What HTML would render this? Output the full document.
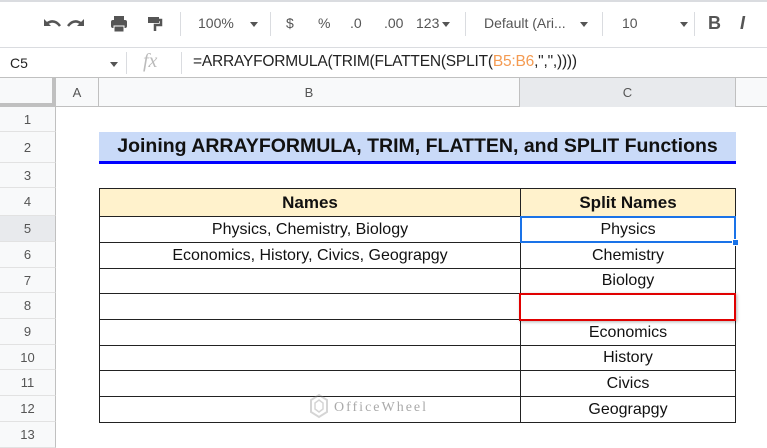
<!DOCTYPE html>
<html><head><meta charset="utf-8"><style>
*{margin:0;padding:0;box-sizing:border-box}
body{width:767px;height:448px;overflow:hidden;background:#fff;font-family:"Liberation Sans",Arial,sans-serif;position:relative;color:#222}
.a{position:absolute}
.rn{position:absolute;left:0;width:56px;background:#f8f9fa;border-right:1px solid #c0c0c0;border-bottom:1px solid #e2e2e2;color:#555;font-size:13px;display:flex;align-items:center;justify-content:center}
.cell{position:absolute;border:1px solid #222;font-size:16px;display:flex;align-items:center;justify-content:center;color:#111}
.tb{color:#555;font-size:14px}
</style></head><body>
<div class="a" style="left:0;top:0;width:767px;height:2px;background:#dadce0"></div>
<svg class="a" style="left:40px;top:14px" width="130" height="20" viewBox="0 0 130 20">
<path d="M6 10 q8-6 14 2" stroke="#555" stroke-width="2.5" fill="none"/><path d="M4 5 v7 h7z" fill="#555"/>
<path d="M42 10 q-8-6 -14 2" stroke="#555" stroke-width="2.5" fill="none"/><path d="M44 5 v7 h-7z" fill="#555"/>
<rect x="74" y="2" width="10" height="4" fill="#555"/><rect x="71" y="6" width="16" height="8" rx="2" fill="#555"/><rect x="74" y="12" width="10" height="6" fill="#555" stroke="#fff" stroke-width="1"/>
<rect x="108" y="3" width="11" height="6" fill="#555"/><path d="M119 6 h2 v5 h-6 v6" stroke="#555" stroke-width="2.5" fill="none"/>
</svg>
<div class="a" style="left:180px;top:12px;width:1px;height:24px;background:#dadce0"></div>
<div class="a tb" style="left:198px;top:15px">100%</div>
<div class="a" style="left:250px;top:22px;border:4px solid transparent;border-top:5px solid #555"></div>
<div class="a" style="left:270px;top:12px;width:1px;height:24px;background:#dadce0"></div>
<div class="a tb" style="left:286px;top:15px">$</div>
<div class="a tb" style="left:318px;top:15px">%</div>
<div class="a tb" style="left:350px;top:15px">.0</div>
<div class="a tb" style="left:384px;top:15px">.00</div>
<div class="a tb" style="left:416px;top:15px">123</div>
<div class="a" style="left:442px;top:22px;border:4px solid transparent;border-top:5px solid #555"></div>
<div class="a" style="left:465px;top:12px;width:1px;height:24px;background:#dadce0"></div>
<div class="a tb" style="left:484px;top:15px">Default (Ari...</div>
<div class="a" style="left:580px;top:22px;border:4px solid transparent;border-top:5px solid #555"></div>
<div class="a" style="left:602px;top:12px;width:1px;height:24px;background:#dadce0"></div>
<div class="a tb" style="left:622px;top:15px">10</div>
<div class="a" style="left:680px;top:22px;border:4px solid transparent;border-top:5px solid #555"></div>
<div class="a" style="left:694px;top:12px;width:1px;height:24px;background:#dadce0"></div>
<div class="a tb" style="left:708px;top:13px;font-weight:bold;font-size:18px">B</div>
<div class="a tb" style="left:740px;top:13px;font-style:italic;font-size:18px;font-weight:bold">I</div>
<div class="a" style="left:0;top:47px;width:767px;height:1px;background:#dadce0"></div>
<div class="a" style="left:10px;top:55px;font-size:14px;color:#222">C5</div>
<div class="a" style="left:110px;top:62px;border:4px solid transparent;border-top:5px solid #555"></div>
<div class="a" style="left:126px;top:52px;width:1px;height:22px;background:#dadce0"></div>
<div class="a" style="left:143px;top:50px;font-size:20px;color:#bbb;font-style:italic;font-family:'Liberation Serif',serif">fx</div>
<div class="a" style="left:181px;top:52px;width:1px;height:22px;background:#dadce0"></div>
<div class="a" style="left:193px;top:53px;font-size:15.5px;color:#222;letter-spacing:-0.2px">=ARRAYFORMULA(TRIM(FLATTEN(SPLIT(<span style="color:#f49b52">B5:B6</span>,",",))))</div>
<div class="a" style="left:0;top:77px;width:767px;height:1px;background:#c0c0c0"></div>
<div class="a" style="left:0;top:78px;width:767px;height:29px;background:#f8f9fa;border-bottom:1px solid #c0c0c0"></div>
<div class="a" style="left:0;top:78px;width:56px;height:29px;border-right:4px solid #c0c0c0;border-bottom:4px solid #c0c0c0"></div>
<div class="a" style="left:56px;top:78px;width:43px;height:29px;border-right:1px solid #c0c0c0;font-size:13px;color:#555;display:flex;align-items:center;justify-content:center">A</div>
<div class="a" style="left:99px;top:78px;width:421px;height:29px;border-right:1px solid #c0c0c0;font-size:13px;color:#555;display:flex;align-items:center;justify-content:center">B</div>
<div class="a" style="left:520px;top:78px;width:216px;height:29px;border-right:1px solid #c0c0c0;background:#e8eaed;font-size:13px;color:#555;display:flex;align-items:center;justify-content:center">C</div>
<div class="rn" style="top:107px;height:25px">1</div>
<div class="rn" style="top:132px;height:31px">2</div>
<div class="rn" style="top:163px;height:25px">3</div>
<div class="rn" style="top:188px;height:28px">4</div>
<div class="rn" style="top:216px;height:26px;background:#e8eaed">5</div>
<div class="rn" style="top:242px;height:26px">6</div>
<div class="rn" style="top:268px;height:25px">7</div>
<div class="rn" style="top:293px;height:26px">8</div>
<div class="rn" style="top:319px;height:26px">9</div>
<div class="rn" style="top:345px;height:25px">10</div>
<div class="rn" style="top:370px;height:26px">11</div>
<div class="rn" style="top:396px;height:26px">12</div>
<div class="rn" style="top:422px;height:26px">13</div>
<div class="a" style="left:99px;top:132px;width:637px;height:29px;background:#c9daf8;font-weight:bold;font-size:19.5px;color:#111;display:flex;align-items:center;justify-content:center">Joining ARRAYFORMULA, TRIM, FLATTEN, and SPLIT Functions</div>
<div class="a" style="left:99px;top:161px;width:637px;height:3px;background:#0000ff"></div>
<div class="cell" style="left:99px;top:188px;width:422px;height:29px;background:#fff2cc;font-weight:bold;font-size:17px">Names</div>
<div class="cell" style="left:520px;top:188px;width:216px;height:29px;background:#fff2cc;font-weight:bold;font-size:17px">Split Names</div>
<div class="cell" style="left:99px;top:216px;width:422px;height:27px">Physics, Chemistry, Biology</div>
<div class="cell" style="left:520px;top:216px;width:216px;height:27px">Physics</div>
<div class="cell" style="left:99px;top:242px;width:422px;height:27px">Economics, History, Civics, Geograpgy</div>
<div class="cell" style="left:520px;top:242px;width:216px;height:27px">Chemistry</div>
<div class="cell" style="left:99px;top:268px;width:422px;height:26px"></div>
<div class="cell" style="left:520px;top:268px;width:216px;height:26px">Biology</div>
<div class="cell" style="left:99px;top:293px;width:422px;height:27px"></div>
<div class="cell" style="left:520px;top:293px;width:216px;height:27px"></div>
<div class="cell" style="left:99px;top:319px;width:422px;height:27px"></div>
<div class="cell" style="left:520px;top:319px;width:216px;height:27px">Economics</div>
<div class="cell" style="left:99px;top:345px;width:422px;height:26px"></div>
<div class="cell" style="left:520px;top:345px;width:216px;height:26px">History</div>
<div class="cell" style="left:99px;top:370px;width:422px;height:27px"></div>
<div class="cell" style="left:520px;top:370px;width:216px;height:27px">Civics</div>
<div class="cell" style="left:99px;top:396px;width:422px;height:27px"></div>
<div class="cell" style="left:520px;top:396px;width:216px;height:27px">Geograpgy</div>
<div class="a" style="left:520px;top:216px;width:216px;height:27px;border:2px solid #1a73e8"></div>
<div class="a" style="left:732px;top:239px;width:7px;height:7px;background:#1a73e8;border:1px solid #fff"></div>
<div class="a" style="left:519px;top:293px;width:217px;height:28px;border:2px solid #e00000;box-shadow:1px 1px 3px rgba(0,0,0,.3)"></div>
<div class="a" style="left:309px;top:393px;width:20px;height:28px;opacity:.35">
<svg width="20" height="28" viewBox="0 0 20 28"><path d="M10 2 L18 7 V19 L10 24 L2 19 V7Z" stroke="#888" stroke-width="2" fill="none"/><path d="M10 7 L14 10 V16 L10 19 L6 16 V10Z" stroke="#888" stroke-width="1.5" fill="none"/></svg></div>
<div class="a" style="left:334px;top:400px;font-size:14px;color:#aaa;letter-spacing:2px;font-family:'Liberation Serif',serif">OfficeWheel</div>
</body></html>
